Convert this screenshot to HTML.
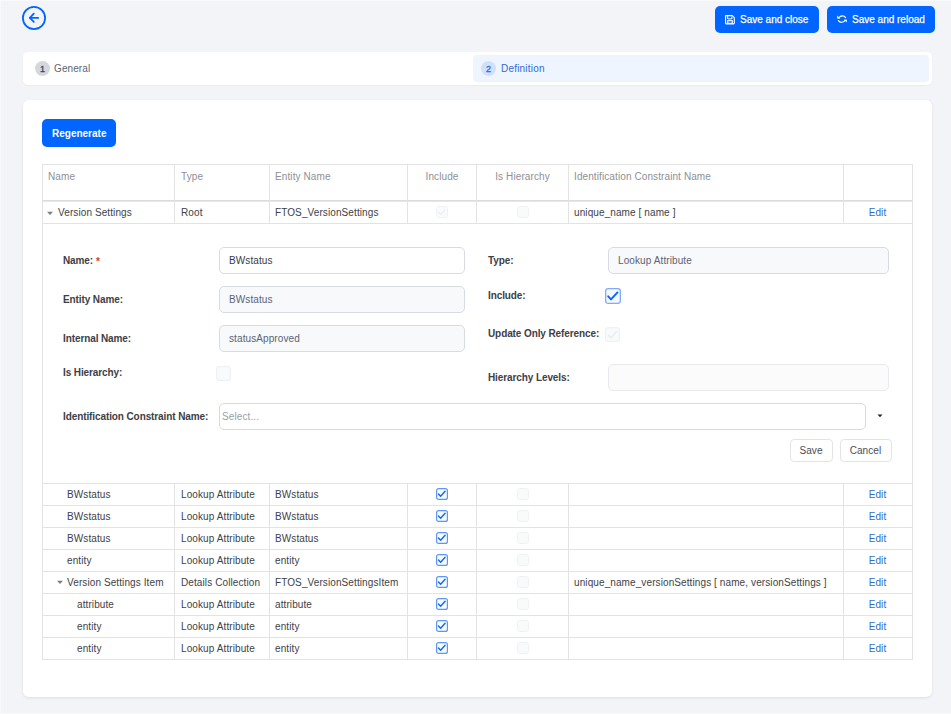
<!DOCTYPE html>
<html><head><meta charset="utf-8"><style>
html,body{margin:0;padding:0;}
body{width:951px;height:714px;overflow:hidden;position:relative;background:#f2f4f7;font-family:"Liberation Sans", sans-serif;}
.t{position:absolute;white-space:nowrap;letter-spacing:0.1px}
.b{position:absolute;}
</style></head><body>
<div class="b" style="left:0;top:0;width:951px;height:1px;background:#f8f9fa"></div><div class="b" style="left:0;top:0;width:1px;height:714px;background:#f8f9fa"></div><div class="b" style="left:0;top:713px;width:951px;height:1px;background:#f8f9fa"></div>
<svg class="b" style="left:21px;top:5px" width="26" height="26" viewBox="0 0 26 26"><circle cx="13" cy="13" r="11.1" fill="none" stroke="#0066ff" stroke-width="1.8"/><path d="M8.9 12.9 H17.2" fill="none" stroke="#0066ff" stroke-width="1.8" stroke-linecap="round"/><path d="M12.8 8.7 L8.9 12.9 L12.8 16.8" fill="none" stroke="#0066ff" stroke-width="1.8" stroke-linecap="round" stroke-linejoin="round"/></svg><div class="b" style="left:715px;top:6px;width:104px;height:27px;background:#0066ff;border-radius:5px"></div><svg class="b" style="left:725px;top:15px" width="10" height="10" viewBox="0 0 10 10"><path d="M1.1 0.6 H7.2 L9.3 2.7 V8.3 Q9.3 8.9 8.7 8.9 H1.1 Q0.6 8.9 0.6 8.3 V1.1 Q0.6 0.6 1.1 0.6 Z" fill="none" stroke="#fff" stroke-width="1.1"/><path d="M2.7 0.8 V3.9 H6.9 V1.6" fill="none" stroke="#fff" stroke-width="1"/><rect x="2.7" y="5.7" width="4.6" height="2.6" fill="none" stroke="#fff" stroke-width="1.1"/></svg><div class="t" style="left:740px;top:14px;font-size:10px;line-height:11px;font-weight:400;color:#fff;letter-spacing:0;-webkit-text-stroke:0.25px #fff">Save and close</div><div class="b" style="left:827px;top:6px;width:108px;height:27px;background:#0066ff;border-radius:5px"></div><svg class="b" style="left:837px;top:15px" width="10" height="9" viewBox="0 0 10 9"><path d="M8.6 2.6 A3.9 3.9 0 0 0 2.0 2.8" fill="none" stroke="#fff" stroke-width="1.1" stroke-linecap="round"/><path d="M0.2 0.6 L0.2 3.7 L3.1 3.4 Z" fill="#fff"/><path d="M1.4 5.6 A3.9 3.9 0 0 0 8.0 5.4" fill="none" stroke="#fff" stroke-width="1.1" stroke-linecap="round"/><path d="M9.8 7.6 L9.8 4.5 L6.9 4.8 Z" fill="#fff"/></svg><div class="t" style="left:852px;top:14px;font-size:10px;line-height:11px;font-weight:400;color:#fff;letter-spacing:0;-webkit-text-stroke:0.25px #fff">Save and reload</div><div class="b" style="left:23px;top:52px;width:909px;height:33px;background:#fff;border-radius:5px;box-shadow:0 1px 2px rgba(0,0,0,0.04)"></div><div class="b" style="left:35px;top:61px;width:15px;height:15px;background:#d3d7de;border-radius:50%"></div><div class="t" style="left:-57.5px;width:200px;text-align:center;top:64px;font-size:9px;line-height:10px;font-weight:400;color:#3f4450;-webkit-text-stroke:0.3px #3f4450">1</div><div class="t" style="left:54px;top:63px;font-size:10px;line-height:11px;font-weight:400;color:#5f6570;">General</div><div class="b" style="left:473px;top:55px;width:456px;height:27px;background:#eef5ff;border-radius:4px"></div><div class="b" style="left:481px;top:61px;width:15px;height:15px;background:#cfe0fa;border-radius:50%"></div><div class="t" style="left:388.5px;width:200px;text-align:center;top:64px;font-size:9px;line-height:10px;font-weight:400;color:#2e6ad3;-webkit-text-stroke:0.3px #2e6ad3">2</div><div class="t" style="left:501px;top:63px;font-size:10px;line-height:11px;font-weight:400;color:#2e6ad3;letter-spacing:0.2px">Definition</div><div class="b" style="left:23px;top:100px;width:909px;height:597px;background:#fff;border-radius:6px;box-shadow:0 1px 3px rgba(0,0,0,0.09)"></div><div class="b" style="left:42px;top:119px;width:74px;height:28px;background:#0066ff;border-radius:5px"></div><div class="t" style="left:52px;top:128px;font-size:10px;line-height:11px;font-weight:700;color:#fff;letter-spacing:0">Regenerate</div><div class="b" style="left:42px;top:164px;width:871px;height:1px;background:#e3e3e3"></div><div class="b" style="left:42px;top:200px;width:871px;height:1px;background:#dcdcdc"></div><div class="b" style="left:42px;top:201px;width:871px;height:1px;background:#e7e7e7"></div><div class="b" style="left:42px;top:223px;width:871px;height:1px;background:#e3e3e3"></div><div class="b" style="left:42px;top:164px;width:1px;height:496px;background:#e3e3e3"></div><div class="b" style="left:912px;top:164px;width:1px;height:496px;background:#e3e3e3"></div><div class="b" style="left:174px;top:164px;width:1px;height:60px;background:#e3e3e3"></div><div class="b" style="left:269px;top:164px;width:1px;height:60px;background:#e3e3e3"></div><div class="b" style="left:407px;top:164px;width:1px;height:60px;background:#e3e3e3"></div><div class="b" style="left:476px;top:164px;width:1px;height:60px;background:#e3e3e3"></div><div class="b" style="left:568px;top:164px;width:1px;height:60px;background:#e3e3e3"></div><div class="b" style="left:843px;top:164px;width:1px;height:60px;background:#e3e3e3"></div><div class="t" style="left:48px;top:171px;font-size:10px;line-height:11px;font-weight:400;color:#8e9095;">Name</div><div class="t" style="left:181px;top:171px;font-size:10px;line-height:11px;font-weight:400;color:#8e9095;">Type</div><div class="t" style="left:275px;top:171px;font-size:10px;line-height:11px;font-weight:400;color:#8e9095;">Entity Name</div><div class="t" style="left:342px;width:200px;text-align:center;top:171px;font-size:10px;line-height:11px;font-weight:400;color:#8e9095;">Include</div><div class="t" style="left:422.5px;width:200px;text-align:center;top:171px;font-size:10px;line-height:11px;font-weight:400;color:#8e9095;">Is Hierarchy</div><div class="t" style="left:574px;top:171px;font-size:10px;line-height:11px;font-weight:400;color:#8e9095;">Identification Constraint Name</div><svg class="b" style="left:47px;top:211px" width="6" height="4" viewBox="0 0 6 4"><path d="M0 0.8 H6 L3 3.9 Z" fill="#7a7e86"/></svg><div class="t" style="left:58px;top:207px;font-size:10px;line-height:11px;font-weight:400;color:#404247;">Version Settings</div><div class="t" style="left:181px;top:207px;font-size:10px;line-height:11px;font-weight:400;color:#404247;">Root</div><div class="t" style="left:275px;top:207px;font-size:10px;line-height:11px;font-weight:400;color:#404247;">FTOS_VersionSettings</div><svg class="b" style="left:436px;top:206px" width="12" height="12" viewBox="0 0 12 12"><rect x="0.5" y="0.5" width="11" height="11" rx="2.2" fill="#f9fafb" stroke="#f0f1f4" stroke-width="1"/><path d="M2.6 6.2 L4.8 8.5 L9.3 3.4" fill="none" stroke="#ebecef" stroke-width="1.1"/></svg><svg class="b" style="left:517px;top:206px" width="12" height="12" viewBox="0 0 12 12"><rect x="0.5" y="0.5" width="11" height="11" rx="2.2" fill="#f9fafb" stroke="#f0f1f4" stroke-width="1"/></svg><div class="t" style="left:574px;top:207px;font-size:10px;line-height:11px;font-weight:400;color:#404247;">unique_name [ name ]</div><div class="t" style="left:777.5px;width:200px;text-align:center;top:207px;font-size:10px;line-height:11px;font-weight:400;color:#2f6ec4;">Edit</div><div class="t" style="left:63px;top:255px;font-size:10px;line-height:11px;font-weight:700;color:#3d4045;letter-spacing:-0.1px">Name:</div><div class="t" style="left:96px;top:256px;font-size:10px;line-height:11px;font-weight:700;color:#d63a3a;">*</div><div class="t" style="left:63px;top:294px;font-size:10px;line-height:11px;font-weight:700;color:#3d4045;letter-spacing:-0.1px">Entity Name:</div><div class="t" style="left:63px;top:333px;font-size:10px;line-height:11px;font-weight:700;color:#3d4045;letter-spacing:-0.1px">Internal Name:</div><div class="t" style="left:63px;top:367px;font-size:10px;line-height:11px;font-weight:700;color:#3d4045;letter-spacing:-0.1px">Is Hierarchy:</div><div class="t" style="left:63px;top:411px;font-size:10px;line-height:11px;font-weight:700;color:#3d4045;letter-spacing:-0.1px">Identification Constraint Name:</div><div class="t" style="left:488px;top:255px;font-size:10px;line-height:11px;font-weight:700;color:#3d4045;letter-spacing:-0.1px">Type:</div><div class="t" style="left:488px;top:290px;font-size:10px;line-height:11px;font-weight:700;color:#3d4045;letter-spacing:-0.1px">Include:</div><div class="t" style="left:488px;top:328px;font-size:10px;line-height:11px;font-weight:700;color:#3d4045;letter-spacing:-0.1px">Update Only Reference:</div><div class="t" style="left:488px;top:372px;font-size:10px;line-height:11px;font-weight:700;color:#3d4045;letter-spacing:-0.1px">Hierarchy Levels:</div><div class="b" style="left:219px;top:247px;width:244px;height:25px;border:1px solid #d7dbe2;border-radius:5px;background:#fff"></div><div class="t" style="left:229px;top:255px;font-size:10px;line-height:11px;font-weight:400;color:#363b45;">BWstatus</div><div class="b" style="left:219px;top:286px;width:244px;height:25px;border:1px solid #d7dbe2;border-radius:5px;background:#f8f9fb"></div><div class="t" style="left:229px;top:294px;font-size:10px;line-height:11px;font-weight:400;color:#5a6475;">BWstatus</div><div class="b" style="left:219px;top:325px;width:244px;height:25px;border:1px solid #d7dbe2;border-radius:5px;background:#f8f9fb"></div><div class="t" style="left:229px;top:333px;font-size:10px;line-height:11px;font-weight:400;color:#5a6475;">statusApproved</div><div class="b" style="left:608px;top:247px;width:279px;height:25px;border:1px solid #d7dbe2;border-radius:5px;background:#f8f9fb"></div><div class="t" style="left:618px;top:255px;font-size:10px;line-height:11px;font-weight:400;color:#5a6475;">Lookup Attribute</div><div class="b" style="left:608px;top:364px;width:279px;height:25px;border:1px solid #e8eaee;border-radius:5px;background:#fbfbfc"></div><svg class="b" style="left:216px;top:366px" width="15" height="15" viewBox="0 0 12 12"><rect x="0.5" y="0.5" width="11" height="11" rx="2.2" fill="#f9fafb" stroke="#f0f1f4" stroke-width="1"/></svg><svg class="b" style="left:605px;top:288px" width="16" height="16" viewBox="0 0 16 16"><rect x="0.65" y="0.65" width="14.7" height="14.7" rx="2.5" fill="#f4f8ff" stroke="#7eacf8" stroke-width="1.3"/><path d="M3.2 8.3 L6 11.4 L12.5 4.4" fill="none" stroke="#0d64f5" stroke-width="1.9" stroke-linecap="round" stroke-linejoin="round"/></svg><svg class="b" style="left:605px;top:327px" width="15" height="15" viewBox="0 0 12 12"><rect x="0.5" y="0.5" width="11" height="11" rx="2.2" fill="#f9fafb" stroke="#f0f1f4" stroke-width="1"/><path d="M2.6 6.2 L4.8 8.5 L9.3 3.4" fill="none" stroke="#ebecef" stroke-width="1.1"/></svg><div class="b" style="left:219px;top:403px;width:645px;height:25px;border:1px solid #d6dbe3;border-radius:5px;background:#fff"></div><div class="t" style="left:222px;top:411px;font-size:10px;line-height:11px;font-weight:400;color:#9a9fa7;">Select...</div><svg class="b" style="left:877px;top:414px" width="6" height="4" viewBox="0 0 6 4"><path d="M0.5 0.4 H5.5 L3 3.2 Z" fill="#1f2328"/></svg><div class="b" style="left:790px;top:439px;width:41px;height:21px;border:1px solid #e2e4e7;border-radius:4px;background:#fff"></div><div class="t" style="left:711px;width:200px;text-align:center;top:445px;font-size:10px;line-height:11px;font-weight:400;color:#4a4e55;">Save</div><div class="b" style="left:840px;top:439px;width:50px;height:21px;border:1px solid #e2e4e7;border-radius:4px;background:#fff"></div><div class="t" style="left:765.5px;width:200px;text-align:center;top:445px;font-size:10px;line-height:11px;font-weight:400;color:#4a4e55;">Cancel</div><div class="b" style="left:42px;top:483px;width:871px;height:1px;background:#e3e3e3"></div><div class="b" style="left:174px;top:483px;width:1px;height:22px;background:#e3e3e3"></div><div class="b" style="left:269px;top:483px;width:1px;height:22px;background:#e3e3e3"></div><div class="b" style="left:407px;top:483px;width:1px;height:22px;background:#e3e3e3"></div><div class="b" style="left:476px;top:483px;width:1px;height:22px;background:#e3e3e3"></div><div class="b" style="left:568px;top:483px;width:1px;height:22px;background:#e3e3e3"></div><div class="b" style="left:843px;top:483px;width:1px;height:22px;background:#e3e3e3"></div><div class="t" style="left:67px;top:489px;font-size:10px;line-height:11px;font-weight:400;color:#404247;">BWstatus</div><div class="t" style="left:181px;top:489px;font-size:10px;line-height:11px;font-weight:400;color:#404247;">Lookup Attribute</div><div class="t" style="left:275px;top:489px;font-size:10px;line-height:11px;font-weight:400;color:#404247;">BWstatus</div><svg class="b" style="left:436px;top:488px" width="12" height="12" viewBox="0 0 12 12"><rect x="0.6" y="0.6" width="10.8" height="10.8" rx="2" fill="#f7faff" stroke="#5d97f6" stroke-width="1.2"/><path d="M2.5 6.1 L4.6 8.3 L9.1 3.3" fill="none" stroke="#1466f5" stroke-width="1.4" stroke-linecap="round" stroke-linejoin="round"/></svg><svg class="b" style="left:517px;top:488px" width="12" height="12" viewBox="0 0 12 12"><rect x="0.5" y="0.5" width="11" height="11" rx="2.2" fill="#f9fafb" stroke="#f0f1f4" stroke-width="1"/></svg><div class="t" style="left:777.5px;width:200px;text-align:center;top:489px;font-size:10px;line-height:11px;font-weight:400;color:#2f6ec4;">Edit</div><div class="b" style="left:42px;top:505px;width:871px;height:1px;background:#e3e3e3"></div><div class="b" style="left:174px;top:505px;width:1px;height:22px;background:#e3e3e3"></div><div class="b" style="left:269px;top:505px;width:1px;height:22px;background:#e3e3e3"></div><div class="b" style="left:407px;top:505px;width:1px;height:22px;background:#e3e3e3"></div><div class="b" style="left:476px;top:505px;width:1px;height:22px;background:#e3e3e3"></div><div class="b" style="left:568px;top:505px;width:1px;height:22px;background:#e3e3e3"></div><div class="b" style="left:843px;top:505px;width:1px;height:22px;background:#e3e3e3"></div><div class="t" style="left:67px;top:511px;font-size:10px;line-height:11px;font-weight:400;color:#404247;">BWstatus</div><div class="t" style="left:181px;top:511px;font-size:10px;line-height:11px;font-weight:400;color:#404247;">Lookup Attribute</div><div class="t" style="left:275px;top:511px;font-size:10px;line-height:11px;font-weight:400;color:#404247;">BWstatus</div><svg class="b" style="left:436px;top:510px" width="12" height="12" viewBox="0 0 12 12"><rect x="0.6" y="0.6" width="10.8" height="10.8" rx="2" fill="#f7faff" stroke="#5d97f6" stroke-width="1.2"/><path d="M2.5 6.1 L4.6 8.3 L9.1 3.3" fill="none" stroke="#1466f5" stroke-width="1.4" stroke-linecap="round" stroke-linejoin="round"/></svg><svg class="b" style="left:517px;top:510px" width="12" height="12" viewBox="0 0 12 12"><rect x="0.5" y="0.5" width="11" height="11" rx="2.2" fill="#f9fafb" stroke="#f0f1f4" stroke-width="1"/></svg><div class="t" style="left:777.5px;width:200px;text-align:center;top:511px;font-size:10px;line-height:11px;font-weight:400;color:#2f6ec4;">Edit</div><div class="b" style="left:42px;top:527px;width:871px;height:1px;background:#e3e3e3"></div><div class="b" style="left:174px;top:527px;width:1px;height:22px;background:#e3e3e3"></div><div class="b" style="left:269px;top:527px;width:1px;height:22px;background:#e3e3e3"></div><div class="b" style="left:407px;top:527px;width:1px;height:22px;background:#e3e3e3"></div><div class="b" style="left:476px;top:527px;width:1px;height:22px;background:#e3e3e3"></div><div class="b" style="left:568px;top:527px;width:1px;height:22px;background:#e3e3e3"></div><div class="b" style="left:843px;top:527px;width:1px;height:22px;background:#e3e3e3"></div><div class="t" style="left:67px;top:533px;font-size:10px;line-height:11px;font-weight:400;color:#404247;">BWstatus</div><div class="t" style="left:181px;top:533px;font-size:10px;line-height:11px;font-weight:400;color:#404247;">Lookup Attribute</div><div class="t" style="left:275px;top:533px;font-size:10px;line-height:11px;font-weight:400;color:#404247;">BWstatus</div><svg class="b" style="left:436px;top:532px" width="12" height="12" viewBox="0 0 12 12"><rect x="0.6" y="0.6" width="10.8" height="10.8" rx="2" fill="#f7faff" stroke="#5d97f6" stroke-width="1.2"/><path d="M2.5 6.1 L4.6 8.3 L9.1 3.3" fill="none" stroke="#1466f5" stroke-width="1.4" stroke-linecap="round" stroke-linejoin="round"/></svg><svg class="b" style="left:517px;top:532px" width="12" height="12" viewBox="0 0 12 12"><rect x="0.5" y="0.5" width="11" height="11" rx="2.2" fill="#f9fafb" stroke="#f0f1f4" stroke-width="1"/></svg><div class="t" style="left:777.5px;width:200px;text-align:center;top:533px;font-size:10px;line-height:11px;font-weight:400;color:#2f6ec4;">Edit</div><div class="b" style="left:42px;top:549px;width:871px;height:1px;background:#e3e3e3"></div><div class="b" style="left:174px;top:549px;width:1px;height:22px;background:#e3e3e3"></div><div class="b" style="left:269px;top:549px;width:1px;height:22px;background:#e3e3e3"></div><div class="b" style="left:407px;top:549px;width:1px;height:22px;background:#e3e3e3"></div><div class="b" style="left:476px;top:549px;width:1px;height:22px;background:#e3e3e3"></div><div class="b" style="left:568px;top:549px;width:1px;height:22px;background:#e3e3e3"></div><div class="b" style="left:843px;top:549px;width:1px;height:22px;background:#e3e3e3"></div><div class="t" style="left:67px;top:555px;font-size:10px;line-height:11px;font-weight:400;color:#404247;">entity</div><div class="t" style="left:181px;top:555px;font-size:10px;line-height:11px;font-weight:400;color:#404247;">Lookup Attribute</div><div class="t" style="left:275px;top:555px;font-size:10px;line-height:11px;font-weight:400;color:#404247;">entity</div><svg class="b" style="left:436px;top:554px" width="12" height="12" viewBox="0 0 12 12"><rect x="0.6" y="0.6" width="10.8" height="10.8" rx="2" fill="#f7faff" stroke="#5d97f6" stroke-width="1.2"/><path d="M2.5 6.1 L4.6 8.3 L9.1 3.3" fill="none" stroke="#1466f5" stroke-width="1.4" stroke-linecap="round" stroke-linejoin="round"/></svg><svg class="b" style="left:517px;top:554px" width="12" height="12" viewBox="0 0 12 12"><rect x="0.5" y="0.5" width="11" height="11" rx="2.2" fill="#f9fafb" stroke="#f0f1f4" stroke-width="1"/></svg><div class="t" style="left:777.5px;width:200px;text-align:center;top:555px;font-size:10px;line-height:11px;font-weight:400;color:#2f6ec4;">Edit</div><div class="b" style="left:42px;top:571px;width:871px;height:1px;background:#e3e3e3"></div><div class="b" style="left:174px;top:571px;width:1px;height:22px;background:#e3e3e3"></div><div class="b" style="left:269px;top:571px;width:1px;height:22px;background:#e3e3e3"></div><div class="b" style="left:407px;top:571px;width:1px;height:22px;background:#e3e3e3"></div><div class="b" style="left:476px;top:571px;width:1px;height:22px;background:#e3e3e3"></div><div class="b" style="left:568px;top:571px;width:1px;height:22px;background:#e3e3e3"></div><div class="b" style="left:843px;top:571px;width:1px;height:22px;background:#e3e3e3"></div><svg class="b" style="left:57px;top:580px" width="6" height="4" viewBox="0 0 6 4"><path d="M0 0.8 H6 L3 3.9 Z" fill="#7a7e86"/></svg><div class="t" style="left:67px;top:577px;font-size:10px;line-height:11px;font-weight:400;color:#404247;">Version Settings Item</div><div class="t" style="left:181px;top:577px;font-size:10px;line-height:11px;font-weight:400;color:#404247;">Details Collection</div><div class="t" style="left:275px;top:577px;font-size:10px;line-height:11px;font-weight:400;color:#404247;">FTOS_VersionSettingsItem</div><div class="t" style="left:574px;top:577px;font-size:10px;line-height:11px;font-weight:400;color:#404247;">unique_name_versionSettings [ name, versionSettings ]</div><svg class="b" style="left:436px;top:576px" width="12" height="12" viewBox="0 0 12 12"><rect x="0.6" y="0.6" width="10.8" height="10.8" rx="2" fill="#f7faff" stroke="#5d97f6" stroke-width="1.2"/><path d="M2.5 6.1 L4.6 8.3 L9.1 3.3" fill="none" stroke="#1466f5" stroke-width="1.4" stroke-linecap="round" stroke-linejoin="round"/></svg><svg class="b" style="left:517px;top:576px" width="12" height="12" viewBox="0 0 12 12"><rect x="0.5" y="0.5" width="11" height="11" rx="2.2" fill="#f9fafb" stroke="#f0f1f4" stroke-width="1"/></svg><div class="t" style="left:777.5px;width:200px;text-align:center;top:577px;font-size:10px;line-height:11px;font-weight:400;color:#2f6ec4;">Edit</div><div class="b" style="left:42px;top:593px;width:871px;height:1px;background:#e3e3e3"></div><div class="b" style="left:174px;top:593px;width:1px;height:22px;background:#e3e3e3"></div><div class="b" style="left:269px;top:593px;width:1px;height:22px;background:#e3e3e3"></div><div class="b" style="left:407px;top:593px;width:1px;height:22px;background:#e3e3e3"></div><div class="b" style="left:476px;top:593px;width:1px;height:22px;background:#e3e3e3"></div><div class="b" style="left:568px;top:593px;width:1px;height:22px;background:#e3e3e3"></div><div class="b" style="left:843px;top:593px;width:1px;height:22px;background:#e3e3e3"></div><div class="t" style="left:77px;top:599px;font-size:10px;line-height:11px;font-weight:400;color:#404247;">attribute</div><div class="t" style="left:181px;top:599px;font-size:10px;line-height:11px;font-weight:400;color:#404247;">Lookup Attribute</div><div class="t" style="left:275px;top:599px;font-size:10px;line-height:11px;font-weight:400;color:#404247;">attribute</div><svg class="b" style="left:436px;top:598px" width="12" height="12" viewBox="0 0 12 12"><rect x="0.6" y="0.6" width="10.8" height="10.8" rx="2" fill="#f7faff" stroke="#5d97f6" stroke-width="1.2"/><path d="M2.5 6.1 L4.6 8.3 L9.1 3.3" fill="none" stroke="#1466f5" stroke-width="1.4" stroke-linecap="round" stroke-linejoin="round"/></svg><svg class="b" style="left:517px;top:598px" width="12" height="12" viewBox="0 0 12 12"><rect x="0.5" y="0.5" width="11" height="11" rx="2.2" fill="#f9fafb" stroke="#f0f1f4" stroke-width="1"/></svg><div class="t" style="left:777.5px;width:200px;text-align:center;top:599px;font-size:10px;line-height:11px;font-weight:400;color:#2f6ec4;">Edit</div><div class="b" style="left:42px;top:615px;width:871px;height:1px;background:#e3e3e3"></div><div class="b" style="left:174px;top:615px;width:1px;height:22px;background:#e3e3e3"></div><div class="b" style="left:269px;top:615px;width:1px;height:22px;background:#e3e3e3"></div><div class="b" style="left:407px;top:615px;width:1px;height:22px;background:#e3e3e3"></div><div class="b" style="left:476px;top:615px;width:1px;height:22px;background:#e3e3e3"></div><div class="b" style="left:568px;top:615px;width:1px;height:22px;background:#e3e3e3"></div><div class="b" style="left:843px;top:615px;width:1px;height:22px;background:#e3e3e3"></div><div class="t" style="left:77px;top:621px;font-size:10px;line-height:11px;font-weight:400;color:#404247;">entity</div><div class="t" style="left:181px;top:621px;font-size:10px;line-height:11px;font-weight:400;color:#404247;">Lookup Attribute</div><div class="t" style="left:275px;top:621px;font-size:10px;line-height:11px;font-weight:400;color:#404247;">entity</div><svg class="b" style="left:436px;top:620px" width="12" height="12" viewBox="0 0 12 12"><rect x="0.6" y="0.6" width="10.8" height="10.8" rx="2" fill="#f7faff" stroke="#5d97f6" stroke-width="1.2"/><path d="M2.5 6.1 L4.6 8.3 L9.1 3.3" fill="none" stroke="#1466f5" stroke-width="1.4" stroke-linecap="round" stroke-linejoin="round"/></svg><svg class="b" style="left:517px;top:620px" width="12" height="12" viewBox="0 0 12 12"><rect x="0.5" y="0.5" width="11" height="11" rx="2.2" fill="#f9fafb" stroke="#f0f1f4" stroke-width="1"/></svg><div class="t" style="left:777.5px;width:200px;text-align:center;top:621px;font-size:10px;line-height:11px;font-weight:400;color:#2f6ec4;">Edit</div><div class="b" style="left:42px;top:637px;width:871px;height:1px;background:#e3e3e3"></div><div class="b" style="left:174px;top:637px;width:1px;height:22px;background:#e3e3e3"></div><div class="b" style="left:269px;top:637px;width:1px;height:22px;background:#e3e3e3"></div><div class="b" style="left:407px;top:637px;width:1px;height:22px;background:#e3e3e3"></div><div class="b" style="left:476px;top:637px;width:1px;height:22px;background:#e3e3e3"></div><div class="b" style="left:568px;top:637px;width:1px;height:22px;background:#e3e3e3"></div><div class="b" style="left:843px;top:637px;width:1px;height:22px;background:#e3e3e3"></div><div class="t" style="left:77px;top:643px;font-size:10px;line-height:11px;font-weight:400;color:#404247;">entity</div><div class="t" style="left:181px;top:643px;font-size:10px;line-height:11px;font-weight:400;color:#404247;">Lookup Attribute</div><div class="t" style="left:275px;top:643px;font-size:10px;line-height:11px;font-weight:400;color:#404247;">entity</div><svg class="b" style="left:436px;top:642px" width="12" height="12" viewBox="0 0 12 12"><rect x="0.6" y="0.6" width="10.8" height="10.8" rx="2" fill="#f7faff" stroke="#5d97f6" stroke-width="1.2"/><path d="M2.5 6.1 L4.6 8.3 L9.1 3.3" fill="none" stroke="#1466f5" stroke-width="1.4" stroke-linecap="round" stroke-linejoin="round"/></svg><svg class="b" style="left:517px;top:642px" width="12" height="12" viewBox="0 0 12 12"><rect x="0.5" y="0.5" width="11" height="11" rx="2.2" fill="#f9fafb" stroke="#f0f1f4" stroke-width="1"/></svg><div class="t" style="left:777.5px;width:200px;text-align:center;top:643px;font-size:10px;line-height:11px;font-weight:400;color:#2f6ec4;">Edit</div><div class="b" style="left:42px;top:659px;width:871px;height:1px;background:#e3e3e3"></div>
</body></html>
